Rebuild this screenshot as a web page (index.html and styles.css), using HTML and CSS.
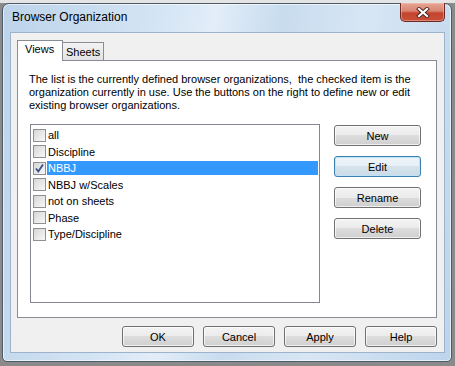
FILE: index.html
```html
<!DOCTYPE html>
<html>
<head>
    <meta charset="utf-8">
    <link rel="stylesheet" href="styles.css">
</head>
<body>
    <div class="window">
        <div class="titlebar">
            <span class="title">Browser Organization</span>
            <div class="close-btn">
                <svg width="14" height="11" viewBox="0 0 14 11">
                    <path d="M3 2 L11 9 M11 2 L3 9" stroke="#4a2320" stroke-width="4" stroke-linecap="square"/>
                    <path d="M3 2 L11 9 M11 2 L3 9" stroke="#fff" stroke-width="2.2" stroke-linecap="square"/>
                </svg>
            </div>
        </div>

        <div class="client">
            <div class="tabs">
                <div class="tab active">Views</div>
                <div class="tab">Sheets</div>
            </div>

            <div class="panel">
                <p class="desc">The list is the currently defined browser organizations,&nbsp; the checked item is the organization currently in use. Use the buttons on the right to define new or edit existing browser organizations.</p>

                <div class="panel-body">
                    <div class="listbox">
                        <div class="item"><span class="check"></span><span class="label">all</span></div>
                        <div class="item"><span class="check"></span><span class="label">Discipline</span></div>
                        <div class="item selected">
                            <span class="check">
                                <svg width="11" height="11" viewBox="0 0 11 11">
                                    <path d="M2 5.5 L4.3 8.5 L9 1.5" fill="none" stroke="#3b4f8a" stroke-width="1.8"/>
                                </svg>
                            </span>
                            <span class="label">NBBJ</span>
                        </div>
                        <div class="item"><span class="check"></span><span class="label">NBBJ w/Scales</span></div>
                        <div class="item"><span class="check"></span><span class="label">not on sheets</span></div>
                        <div class="item"><span class="check"></span><span class="label">Phase</span></div>
                        <div class="item"><span class="check"></span><span class="label">Type/Discipline</span></div>
                    </div>

                    <div class="side-buttons">
                        <button class="btn">New</button>
                        <button class="btn default">Edit</button>
                        <button class="btn">Rename</button>
                        <button class="btn">Delete</button>
                    </div>
                </div>
            </div>

            <div class="footer">
                <button class="btn small">OK</button>
                <button class="btn small">Cancel</button>
                <button class="btn small">Apply</button>
                <button class="btn small">Help</button>
            </div>
        </div>
    </div>
</body>
</html>
```

FILE: styles.css
```css
body {
    margin: 0;
    padding: 0;
    width: 455px;
    height: 366px;
    overflow: hidden;
    background: linear-gradient(#e4e4e4 0px, #e4e4e4 3px, #8a8a8a 3px);
    font-family: "Liberation Sans", Arial, sans-serif;
    font-size: 11px;
    color: #000;
}

.window {
    margin: 3px 0 0 2px;
    width: 450px;
    box-sizing: border-box;
    border: 1px solid #4d5a68;
    border-radius: 7px 7px 5px 5px;
    padding: 0 6px 8px 7px;
    background: linear-gradient(100deg, #bcd3ea 0%, #d3e4f4 30%, #e2edf8 42%, #c8dcef 55%, #d8e6f4 72%, #bcd4ec 100%);
    box-shadow: inset 0 0 0 1px rgba(255, 255, 255, 0.6);
}

.titlebar {
    display: flex;
    height: 28px;
}

.title {
    padding-left: 2px;
    padding-top: 6px;
    font-size: 12px;
    color: #000;
}

.close-btn {
    margin-left: auto;
    margin-top: -1px;
    width: 45px;
    height: 19px;
    box-sizing: border-box;
    border: 1px solid #6b2b24;
    border-top: none;
    border-radius: 0 0 5px 5px;
    background: linear-gradient(#e7a595 0%, #d98470 45%, #c5452f 55%, #c84e36 100%);
    box-shadow: inset 0 0 0 1px rgba(255, 200, 190, 0.45);
    display: flex;
    align-items: center;
    justify-content: center;
}

.client {
    width: 435px;
    box-sizing: border-box;
    border: 1px solid #9cb3cb;
    background-color: #f0f0f0;
    padding: 7px 7px 5px 6px;
}

.tabs {
    display: flex;
    align-items: flex-end;
    height: 20px;
}

.tab {
    box-sizing: border-box;
    height: 18px;
    width: 41px;
    border: 1px solid #898c95;
    border-left: none;
    border-bottom: none;
    background: linear-gradient(#f2f2f2, #e3e3e3);
    padding-left: 3px;
    line-height: 18px;
}

.tab.active {
    position: relative;
    z-index: 1;
    height: 21px;
    width: 46px;
    margin-bottom: -1px;
    border-left: 1px solid #898c95;
    background: #fff;
    padding-left: 7px;
    line-height: 17px;
}

.panel {
    border: 1px solid #898c95;
    background: #fff;
    padding: 12px 10px 14px 11px;
}

.desc {
    margin: 0;
    line-height: 13px;
    width: 390px;
}

.panel-body {
    display: flex;
    margin-top: 12px;
}

.listbox {
    margin-left: 1px;
    width: 290px;
    height: 179px;
    box-sizing: border-box;
    border: 1px solid #828790;
    padding: 2px 1px 0 2px;
}

.item {
    display: flex;
    align-items: center;
    height: 16.5px;
}

.check {
    width: 13px;
    height: 13px;
    box-sizing: border-box;
    border: 1px solid #8f8f8f;
    background: linear-gradient(135deg, #d6d6d6, #f8f8f8);
    display: flex;
    align-items: center;
    justify-content: center;
    flex-shrink: 0;
}

.label {
    margin-left: 1px;
    padding-left: 1px;
    height: 14px;
    line-height: 14px;
}

.selected .label {
    flex: 1;
    background: #3399ff;
    color: #fff;
}

.side-buttons {
    display: flex;
    flex-direction: column;
    gap: 10px;
    margin-left: 14px;
    margin-top: 1px;
}

.btn {
    width: 87px;
    height: 21px;
    box-sizing: border-box;
    border: 1px solid #707070;
    border-radius: 3px;
    background: linear-gradient(#f3f3f3 0%, #ebebeb 50%, #dddddd 50%, #cfcfcf 100%);
    box-shadow: inset 0 0 0 1px rgba(255, 255, 255, 0.7);
    font-family: "Liberation Sans", Arial, sans-serif;
    font-size: 11px;
    color: #000;
    padding: 0;
}

.btn.default {
    border-color: #3c7fb1;
    background: linear-gradient(#eef5f9 0%, #e6eff5 50%, #d6e3ec 50%, #cbdbe6 100%);
    box-shadow: inset 0 0 0 1px #bfe3f7;
}

.btn.small {
    width: 72px;
}

.footer {
    display: flex;
    justify-content: flex-end;
    gap: 9px;
    margin-top: 8px;
}
```
